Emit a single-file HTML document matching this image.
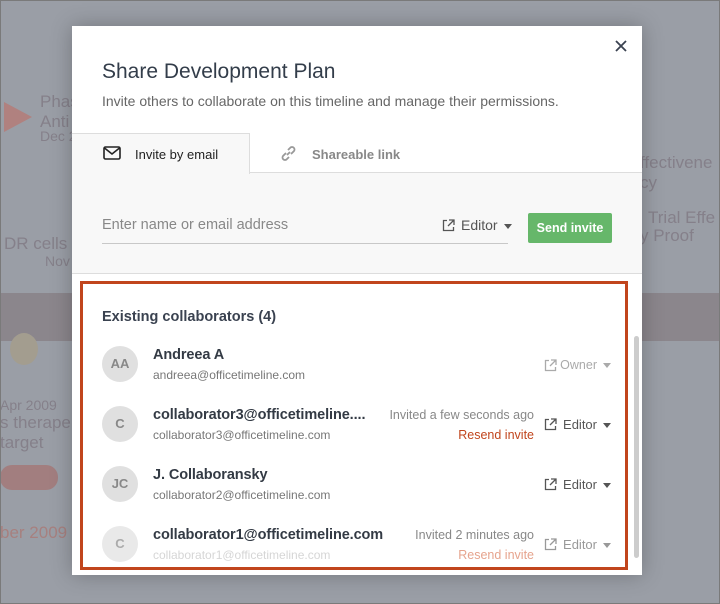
<!DOCTYPE html>
<html><head><meta charset="utf-8"><style>
*{box-sizing:border-box;margin:0;padding:0}
body{width:720px;height:604px;overflow:hidden;background:#9a9ea6;font-family:"Liberation Sans",sans-serif;position:relative}
.fr{position:absolute;left:0;top:0;width:720px;height:604px;border:1px solid #7a7a7a;pointer-events:none}
.bg{position:absolute;color:#85808a;font-size:17px;white-space:nowrap}
.m{position:absolute;left:72px;top:26px;width:570px;height:549px;background:#fff;box-shadow:0 0 20px rgba(0,0,0,.25)}
.a{position:absolute;white-space:nowrap}
.dd{display:inline-block;width:0;height:0;border-left:4px solid transparent;border-right:4px solid transparent;border-top:5px solid #555;vertical-align:middle;margin-left:6px}
.av{position:absolute;left:30px;width:36px;height:36px;border-radius:50%;background:#e0e0e0;color:#888;font-weight:bold;font-size:13px;text-align:center;line-height:36px}
.nm{position:absolute;left:81px;font-size:14.5px;color:#333a44;font-weight:bold;letter-spacing:-0.1px}
.em{position:absolute;left:81px;font-size:12px;color:#777}
.rl{position:absolute;right:14px;font-size:13px;color:#555}
</style></head><body>
<div class="bg" style="left:40px;top:92px">Phase<br>Anti</div>
<div class="bg" style="left:40px;top:128px;font-size:14px">Dec 2</div>
<div style="position:absolute;left:4px;top:102px;border-top:15px solid transparent;border-bottom:15px solid transparent;border-left:28px solid #b0817f"></div>
<div class="bg" style="left:4px;top:234px">DR cells</div>
<div class="bg" style="left:45px;top:253px;font-size:14px">Nov</div>
<div style="position:absolute;left:0;top:293px;width:720px;height:48px;background:#8b868c"></div>
<div style="position:absolute;left:10px;top:333px;width:28px;height:32px;border-radius:50%;background:#a39d8f"></div>
<div class="bg" style="left:0;top:397px;font-size:14px">Apr 2009</div>
<div class="bg" style="left:0;top:413px">s therape<br>target</div>
<div style="position:absolute;left:0;top:465px;width:58px;height:25px;border-radius:12px;background:#a27e7f"></div>
<div class="bg" style="left:0;top:523px;color:#a7807f">ber 2009</div>
<div class="bg" style="left:640px;top:153px">ffectivene<br>cy</div>
<div class="bg" style="left:648px;top:208px">Trial Effe</div>
<div class="bg" style="left:640px;top:226px">y Proof</div>
<div class="m">
<svg style="position:absolute;right:15px;top:14px" width="12" height="12" viewBox="0 0 12 12"><path d="M1 1L11 11M11 1L1 11" stroke="#3a4250" stroke-width="1.8"/></svg>
<div class="a" style="left:30px;top:34px;font-size:21px;color:#333d4a">Share Development Plan</div>
<div class="a" style="left:30px;top:67px;font-size:14px;color:#666">Invite others to collaborate on this timeline and manage their permissions.</div>
<div style="position:absolute;left:0;top:146px;width:570px;height:102px;background:#f8f8f8;border-top:1px solid #ddd;border-bottom:1px solid #ddd"></div>
<div style="position:absolute;left:0;top:107px;width:178px;height:41px;background:#f8f8f8;border:1px solid #ddd;border-bottom:none;border-left:none"></div>
<svg style="position:absolute;left:31px;top:120px" width="18" height="14" viewBox="0 0 18 14"><rect x="1" y="1" width="16" height="12" rx="1.5" fill="none" stroke="#222" stroke-width="1.6"/><path d="M1.5 2 L9 8 L16.5 2" fill="none" stroke="#222" stroke-width="1.6"/></svg>
<div class="a" style="left:63px;top:121px;font-size:13px;color:#222">Invite by email</div>
<svg style="position:absolute;left:207px;top:118px" width="19" height="19" viewBox="0 0 19 19"><path d="M8 11 L11 8 M7 9 L4 12 a2.5 2.5 0 0 0 3.5 3.5 L10 13 M9 6 L11.5 3.5 a2.5 2.5 0 0 1 3.5 3.5 L12 10" fill="none" stroke="#999" stroke-width="1.8"/></svg>
<div class="a" style="left:240px;top:121px;font-size:13px;color:#888;font-weight:bold">Shareable link</div>
<div class="a" style="left:30px;top:191px;font-size:14.5px;color:#888">Enter name or email address</div>
<div style="position:absolute;left:30px;top:217px;width:406px;border-top:1px solid #c8c8c8"></div>
<svg style="position:absolute;left:370px;top:193px" width="13" height="13" viewBox="0 0 13 13"><path d="M5 1.5H1.5v10h10V8 M7 1h5v5 M12 1L6 7" fill="none" stroke="#555" stroke-width="1.3"/></svg>
<div class="a" style="left:389px;top:191px;font-size:14px;color:#555">Editor<span class="dd"></span></div>
<div style="position:absolute;left:456px;top:187px;width:84px;height:30px;background:#66b76a;border-radius:2px;color:#fff;font-weight:bold;font-size:12.5px;text-align:center;line-height:30px">Send invite</div>
<div style="position:absolute;left:8px;top:255px;width:548px;height:289px;border:3px solid #c1451d;overflow:hidden">
<div class="a" style="left:19px;top:25px;font-size:14.5px;color:#3a4250;font-weight:bold">Existing collaborators (4)</div>
<div class="av" style="left:19px;top:62px">AA</div><div class="nm" style="left:70px;top:63px">Andreea A</div><div class="em" style="left:70px;top:84px">andreea@officetimeline.com</div>
<div class="rl" style="top:74px;color:#aaa;font-size:12.5px">Owner<span class="dd" style="border-top-color:#aaa"></span></div>
<div class="av" style="left:19px;top:122px">C</div><div class="nm" style="left:70px;top:123px">collaborator3@officetimeline....</div><div class="em" style="left:70px;top:144px">collaborator3@officetimeline.com</div>
<div class="a" style="right:91px;top:124px;font-size:12.5px;color:#888">Invited a few seconds ago</div>
<div class="a" style="right:91px;top:144px;font-size:12.5px;color:#c1451d">Resend invite</div>
<div class="rl" style="top:133px">Editor<span class="dd"></span></div>
<div class="av" style="left:19px;top:182px">JC</div><div class="nm" style="left:70px;top:183px">J. Collaboransky</div><div class="em" style="left:70px;top:204px">collaborator2@officetimeline.com</div>
<div class="rl" style="top:193px">Editor<span class="dd"></span></div>
<div class="av" style="left:19px;top:242px;opacity:.7">C</div><div class="nm" style="left:70px;top:243px">collaborator1@officetimeline.com</div><div class="em" style="left:70px;top:264px;opacity:.3">collaborator1@officetimeline.com</div>
<div class="a" style="right:91px;top:244px;font-size:12.5px;color:#888">Invited 2 minutes ago</div>
<div class="a" style="right:91px;top:264px;font-size:12.5px;color:#e6a48e">Resend invite</div>
<div class="rl" style="top:253px;color:#999">Editor<span class="dd" style="border-top-color:#999"></span></div>
</div>
<svg style="position:absolute;left:472px;top:333px" width="13" height="13" viewBox="0 0 13 13"><path d="M5 1.5H1.5v10h10V8 M7 1h5v5 M12 1L6 7" fill="none" stroke="#aaa" stroke-width="1.3"/></svg>
<svg style="position:absolute;left:472px;top:392px" width="13" height="13" viewBox="0 0 13 13"><path d="M5 1.5H1.5v10h10V8 M7 1h5v5 M12 1L6 7" fill="none" stroke="#555" stroke-width="1.3"/></svg>
<svg style="position:absolute;left:472px;top:452px" width="13" height="13" viewBox="0 0 13 13"><path d="M5 1.5H1.5v10h10V8 M7 1h5v5 M12 1L6 7" fill="none" stroke="#555" stroke-width="1.3"/></svg>
<svg style="position:absolute;left:472px;top:512px" width="13" height="13" viewBox="0 0 13 13"><path d="M5 1.5H1.5v10h10V8 M7 1h5v5 M12 1L6 7" fill="none" stroke="#999" stroke-width="1.3"/></svg>
<div style="position:absolute;left:562px;top:310px;width:5px;height:222px;background:#ccc;border-radius:3px"></div>
</div>
<div class="fr"></div>
</body></html>
